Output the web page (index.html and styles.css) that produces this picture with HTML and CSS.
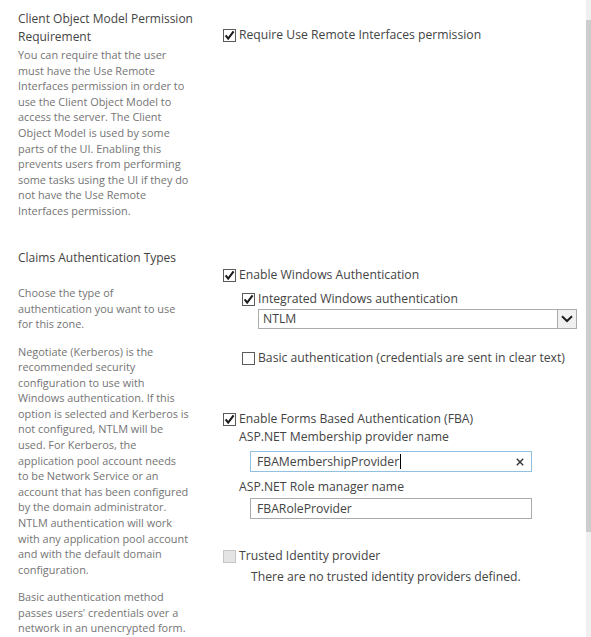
FILE: index.html
```html
<!DOCTYPE html>
<html lang="en">
<head>
<meta charset="utf-8">
<title>Authentication settings</title>
<link rel="stylesheet" href="styles.css">
</head>
<body>
<div class="page">
  <section class="sect s1">
    <div class="info">
      <h3 class="title">Client Object Model Permission<br>Requirement</h3>
      <div class="desc">
        <p>You can require that the user<br>must have the Use Remote<br>Interfaces permission in order to<br>use the Client Object Model to<br>access the server. The Client<br>Object Model is used by some<br>parts of the UI. Enabling this<br>prevents users from performing<br>some tasks using the UI if they do<br>not have the Use Remote<br>Interfaces permission.</p>
      </div>
    </div>
    <div class="controls">
      <label class="row">
        <span class="cb checked"><svg viewBox="0 0 13 13" width="13" height="13"><path d="M2.6 6.4 L5.2 9.6 L10.6 2.4" fill="none" stroke="#1e1e1e" stroke-width="2.1"/></svg></span>
        <span>Require Use Remote Interfaces permission</span>
      </label>
    </div>
  </section>

  <section class="sect s2">
    <div class="info">
      <h3 class="title">Claims Authentication Types</h3>
      <div class="desc">
        <p>Choose the type of<br>authentication you want to use<br>for this zone.</p>
        <p>Negotiate (Kerberos) is the<br>recommended security<br>configuration to use with<br>Windows authentication. If this<br>option is selected and Kerberos is<br>not configured, NTLM will be<br>used. For Kerberos, the<br>application pool account needs<br>to be Network Service or an<br>account that has been configured<br>by the domain administrator.<br>NTLM authentication will work<br>with any application pool account<br>and with the default domain<br>configuration.</p>
        <p>Basic authentication method<br>passes users' credentials over a<br>network in an unencrypted form.</p>
      </div>
    </div>
    <div class="controls">
      <label class="row r-win">
        <span class="cb checked"><svg viewBox="0 0 13 13" width="13" height="13"><path d="M2.6 6.4 L5.2 9.6 L10.6 2.4" fill="none" stroke="#1e1e1e" stroke-width="2.1"/></svg></span>
        <span>Enable Windows Authentication</span>
      </label>
      <label class="row sub r-int">
        <span class="cb checked"><svg viewBox="0 0 13 13" width="13" height="13"><path d="M2.6 6.4 L5.2 9.6 L10.6 2.4" fill="none" stroke="#1e1e1e" stroke-width="2.1"/></svg></span>
        <span>Integrated Windows authentication</span>
      </label>
      <div class="select">
        <span class="select-text">NTLM</span>
        <span class="select-btn"><svg viewBox="0 0 12 8" width="12" height="8"><path d="M1 1.2 L6 6 L11 1.2" fill="none" stroke="#1e1e1e" stroke-width="2"/></svg></span>
      </div>
      <label class="row sub r-basic">
        <span class="cb"></span>
        <span>Basic authentication (credentials are sent in clear text)</span>
      </label>
      <label class="row r-fba">
        <span class="cb checked"><svg viewBox="0 0 13 13" width="13" height="13"><path d="M2.6 6.4 L5.2 9.6 L10.6 2.4" fill="none" stroke="#1e1e1e" stroke-width="2.1"/></svg></span>
        <span>Enable Forms Based Authentication (FBA)</span>
      </label>
      <div class="field-label l-member">ASP.NET Membership provider name</div>
      <div class="input focused">
        <span class="input-text">FBAMembershipProvider</span><span class="caret"></span>
        <span class="clear"><svg viewBox="0 0 8 8" width="8" height="8"><path d="M0.8 0.8 L7.2 7.2 M7.2 0.8 L0.8 7.2" fill="none" stroke="#333" stroke-width="1.4"/></svg></span>
      </div>
      <div class="field-label l-role">ASP.NET Role manager name</div>
      <div class="input i-role">
        <span class="input-text">FBARoleProvider</span>
      </div>
      <label class="row r-trust">
        <span class="cb disabled"></span>
        <span>Trusted Identity provider</span>
      </label>
      <div class="note">There are no trusted identity providers defined.</div>
    </div>
  </section>
</div>
<div class="scrollbar"><div class="thumb"></div></div>
</body>
</html>
```

FILE: styles.css
```css
html, body {
  margin: 0;
  padding: 0;
  background: #ffffff;
}

body {
  font-family: "Open Sans", "Noto Sans", sans-serif;
  color: #444444;
  overflow: hidden;
}

.page {
  padding-top: 10px;
}

.sect {
  display: grid;
  grid-template-columns: 223px 1fr;
}

.s2 {
  margin-top: 19px;
}

.info {
  padding-left: 18px;
}

.title {
  margin: 0;
  font-weight: normal;
  font-size: 12px;
  line-height: 18px;
  color: #444444;
  white-space: nowrap;
}

.desc {
  font-size: 10.9px;
  line-height: 15.6px;
  color: #747474;
  white-space: nowrap;
  margin-top: 1px;
}

.s2 .desc {
  margin-top: 18px;
}

.desc p {
  margin: 0 0 11.6px;
}

.controls {
  padding-top: 16px;
  display: flex;
  flex-direction: column;
  align-items: flex-start;
  font-size: 12.2px;
  color: #444444;
}

.s2 .controls {
  padding-top: 17px;
}

.row {
  display: flex;
  align-items: center;
  height: 18px;
  line-height: 18px;
  white-space: nowrap;
}

.cb {
  width: 13px;
  height: 13px;
  box-sizing: border-box;
  border: 1px solid #5a5a5a;
  background: #ffffff;
  margin-right: 3px;
  flex-shrink: 0;
  position: relative;
  display: block;
}

.cb svg {
  position: absolute;
  left: -1px;
  top: -1px;
}

.cb.disabled {
  background: #e4e4e4;
  border-color: #c6c6c6;
}

.sub {
  margin-left: 19px;
}

.r-int {
  margin-top: 6px;
}

.select {
  margin-top: 1px;
  margin-left: 35px;
  width: 319px;
  height: 20px;
  box-sizing: border-box;
  border: 1px solid #ababab;
  display: flex;
  align-items: center;
}

.select-text {
  padding-left: 4px;
  line-height: 18px;
  flex: 1;
}

.select-btn {
  width: 19px;
  height: 18px;
  box-sizing: border-box;
  border-left: 1px solid #ababab;
  background: #f0f0f0;
  display: flex;
  align-items: center;
  justify-content: center;
}

.r-basic {
  margin-top: 20px;
}

.r-fba {
  margin-top: 43px;
}

.field-label {
  margin-left: 16px;
  height: 18px;
  line-height: 18px;
  white-space: nowrap;
}

.input {
  margin-left: 27px;
  width: 282px;
  height: 21px;
  box-sizing: border-box;
  border: 1px solid #ababab;
  display: flex;
  align-items: center;
  padding-left: 6px;
  line-height: 18px;
}

.input.focused {
  margin-top: 5px;
  border-color: #92c0e0;
}

.caret {
  width: 1px;
  height: 15px;
  background: #000000;
  margin-left: 1px;
}

.clear {
  margin-left: auto;
  margin-right: 7px;
  display: flex;
}

.l-role {
  margin-top: 6px;
}

.i-role {
  margin-top: 2px;
}

.r-trust {
  margin-top: 28px;
}

.note {
  margin-top: 3px;
  margin-left: 28px;
  height: 18px;
  line-height: 18px;
  white-space: nowrap;
}

.scrollbar {
  position: fixed;
  top: 0;
  right: 0;
  width: 5px;
  height: 100%;
  background: #f0f0f0;
}

.thumb {
  position: absolute;
  left: 0;
  right: 0;
  top: 20px;
  height: 512px;
  background: #cdcdcd;
}
```
